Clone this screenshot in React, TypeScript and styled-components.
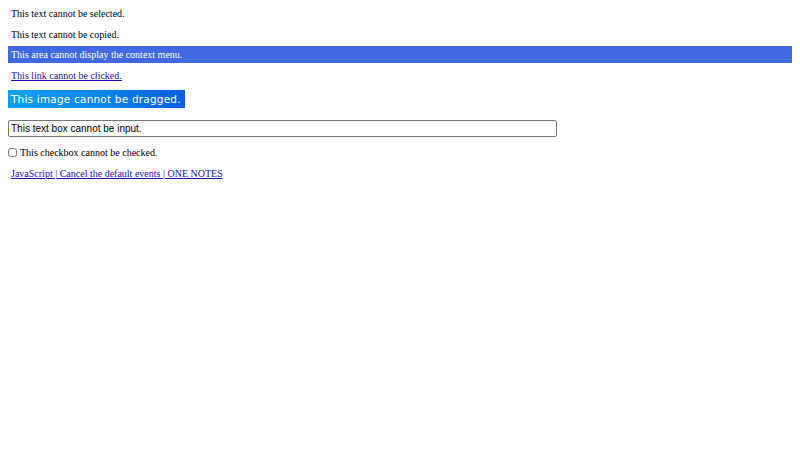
import styled, { createGlobalStyle } from "styled-components"

const GlobalStyle = createGlobalStyle`
  body {
    margin: 0;
    background: #fff;
    font-family: "Liberation Serif", "Times New Roman", serif;
    font-size: 10px;
    line-height: 13px;
    color: #000;
  }
`

const Page = styled.div`
  padding: 5px 8px;
  display: flex;
  flex-direction: column;
  align-items: flex-start;
`

const Line = styled.div<{ $highlight?: boolean }>`
  align-self: stretch;
  padding: 2px 3px;
  margin-bottom: 3.5px;
  background: ${(p) => (p.$highlight ? "#4169e1" : "transparent")};
  color: ${(p) => (p.$highlight ? "#fff" : "#000")};
  user-select: none;
`

const Link = styled.a`
  color: #1a0dab;
  text-decoration: underline;
`

const Picture = styled.div`
  margin-top: 3px;
  width: 177px;
  height: 18px;
  box-sizing: border-box;
  padding: 0 3px;
  display: flex;
  align-items: center;
  background: linear-gradient(90deg, #0aa0f0 0%, #0a86ea 50%, #0a5ee0 100%);
  color: #fff;
  font-family: "DejaVu Sans", sans-serif;
  font-size: 10.5px;
  letter-spacing: 0.2px;
  white-space: nowrap;
  overflow: hidden;
  user-select: none;
`

const TextBox = styled.input`
  margin-top: 12px;
  width: 549px;
  height: 17px;
  box-sizing: border-box;
  padding: 0 2px;
  border: 1px solid #767676;
  border-radius: 2px;
  font-family: "Liberation Sans", Arial, sans-serif;
  font-size: 10px;
  color: #000;
`

const CheckRow = styled.label`
  margin-top: 9px;
  display: flex;
  align-items: center;
  gap: 3px;
`

const Box = styled.input`
  margin: 0;
  width: 9px;
  height: 9px;
`

const Footer = styled.div`
  margin-top: 7.5px;
  padding: 0 3px;
`

export default function App() {
  return (
    <>
      <GlobalStyle />
      <Page>
        <Line>This text cannot be selected.</Line>
        <Line>This text cannot be copied.</Line>
        <Line $highlight>This area cannot display the context menu.</Line>
        <Line>
          <Link href="#">This link cannot be clicked.</Link>
        </Line>
        <Picture>This image cannot be dragged.</Picture>
        <TextBox defaultValue="This text box cannot be input." />
        <CheckRow>
          <Box type="checkbox" />
          This checkbox cannot be checked.
        </CheckRow>
        <Footer>
          <Link href="#">JavaScript | Cancel the default events | ONE NOTES</Link>
        </Footer>
      </Page>
    </>
  )
}
